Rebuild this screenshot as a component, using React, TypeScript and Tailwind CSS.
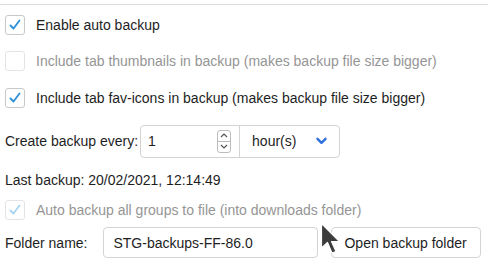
import React from "react";

function Check({ checked, disabled }: { checked?: boolean; disabled?: boolean }) {
  return (
    <div
      className={`w-[20px] h-[20px] rounded-[3px] border flex items-center justify-center shrink-0 ${
        disabled ? "border-[#e4e4e4] bg-white" : "border-[#c9c9c9] bg-white"
      }`}
    >
      {checked && (
        <svg width="14" height="14" viewBox="0 0 14 14">
          <path
            d="M2.5 7.5 L5.5 10.5 L11.5 2.5"
            fill="none"
            stroke={disabled ? "#a9d3ef" : "#2d8fd8"}
            strokeWidth="1.8"
            strokeLinecap="round"
            strokeLinejoin="round"
          />
        </svg>
      )}
    </div>
  );
}

function CheckRow({
  checked,
  disabled,
  label,
  h,
}: {
  checked?: boolean;
  disabled?: boolean;
  label: string;
  h: string;
}) {
  return (
    <div className={`flex items-center pl-[5px] ${h}`}>
      <Check checked={checked} disabled={disabled} />
      <span className={`ml-[11px] ${disabled ? "text-[#959595]" : "text-[#1e1e1e]"}`}>{label}</span>
    </div>
  );
}

export default function App() {
  return (
    <div
      className="w-[488px] h-[266px] bg-white relative overflow-hidden text-[14px] leading-none"
      style={{ fontFamily: '"Liberation Sans", Arial, sans-serif' }}
    >
      <div className="h-[4px]" />
      <div className="border-t border-[#dcdcdc]" />
      <CheckRow checked label="Enable auto backup" h="h-[40px]" />
      <CheckRow disabled label="Include tab thumbnails in backup (makes backup file size bigger)" h="h-[32px]" />
      <CheckRow checked label="Include tab fav-icons in backup (makes backup file size bigger)" h="h-[42px]" />
      <div className="flex items-center pl-[5px] h-[44px] text-[#1e1e1e]">
        <span>Create backup every:</span>
        <div className="ml-[2px] flex h-[33px] w-[200px] border border-[#d4d4d4] rounded-[4px]">
          <div className="w-[99px] flex items-center pl-[7px] pr-[8px] border-r border-[#d4d4d4]">
            <span className="flex-1">1</span>
            <div className="flex flex-col w-[14px] h-[23px] border border-[#bdbdbd] rounded-[3px]">
              <div className="flex-1 flex items-center justify-center border-b border-[#bdbdbd]">
                <svg width="8" height="5" viewBox="0 0 8 5">
                  <path d="M1 4 L4 1 L7 4" fill="none" stroke="#555" strokeWidth="1.2" />
                </svg>
              </div>
              <div className="flex-1 flex items-center justify-center">
                <svg width="8" height="5" viewBox="0 0 8 5">
                  <path d="M1 1 L4 4 L7 1" fill="none" stroke="#555" strokeWidth="1.2" />
                </svg>
              </div>
            </div>
          </div>
          <div className="flex-1 flex items-center pl-[12px]">
            <span>hour(s)</span>
            <svg className="ml-[20px]" width="11" height="8" viewBox="0 0 11 8">
              <path d="M1.5 1.8 L5.5 5.8 L9.5 1.8" fill="none" stroke="#2f6fde" strokeWidth="2.4" strokeLinecap="round" strokeLinejoin="round" />
            </svg>
          </div>
        </div>
      </div>
      <div className="flex items-center pl-[5px] h-[34px] text-[#1e1e1e]">Last backup: 20/02/2021, 12:14:49</div>
      <CheckRow checked disabled label="Auto backup all groups to file (into downloads folder)" h="h-[26px]" />
      <div className="flex items-center pl-[5px] h-[39px] text-[#1e1e1e]">
        <span>Folder name:</span>
        <div className="ml-[16px] w-[215px] h-[31px] border border-[#d4d4d4] rounded-[4px] flex items-center pl-[9px]">
          STG-backups-FF-86.0
        </div>
        <div className="ml-[13px] w-[150px] h-[31px] border border-[#d4d4d4] rounded-[4px] flex items-center pl-[12px]">
          Open backup folder
        </div>
      </div>
      <svg className="absolute left-[320px] top-[222px]" width="22" height="34" viewBox="0 0 22 34">
        <path d="M1.5 1.5 L1.5 26 L7.5 20.5 L12 31 L16 29.5 L11.5 19.5 L19.5 19.5 Z" fill="#3c3c3c" stroke="#ffffff" strokeWidth="1.2" strokeLinejoin="round" />
      </svg>
    </div>
  );
}
